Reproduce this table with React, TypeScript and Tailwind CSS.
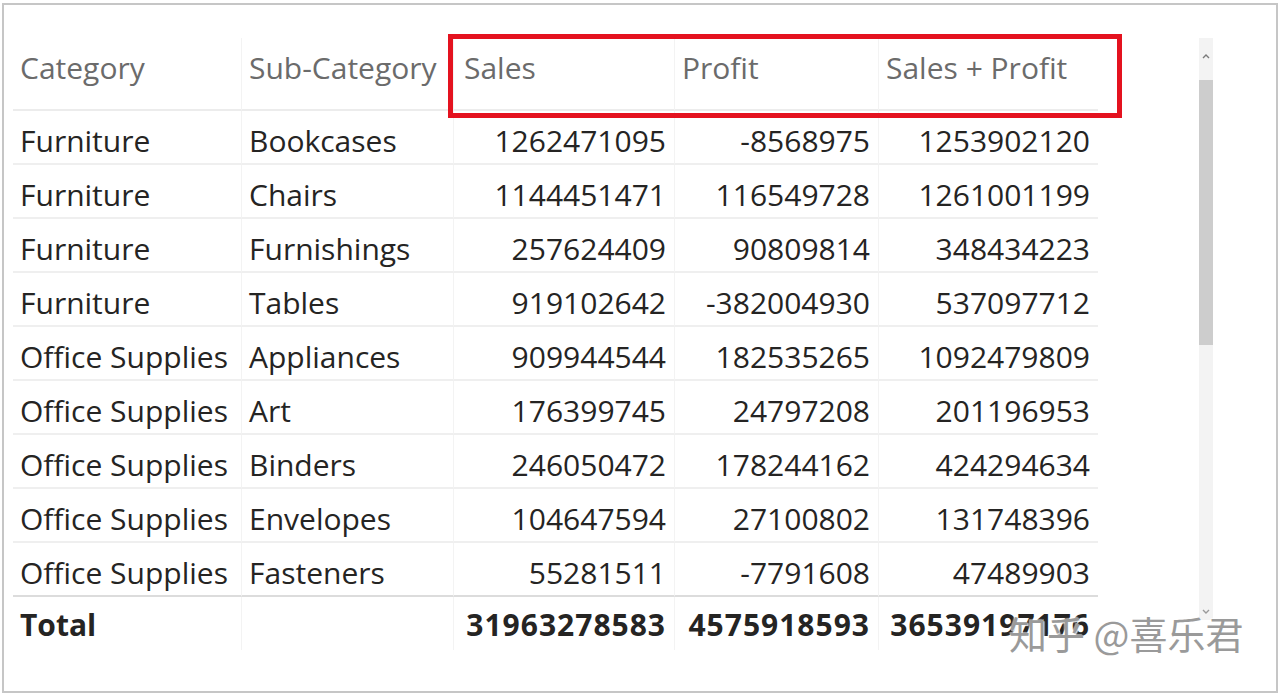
import React from "react";

const rows: [string, string, string, string, string][] = [
  ["Furniture", "Bookcases", "1262471095", "-8568975", "1253902120"],
  ["Furniture", "Chairs", "1144451471", "116549728", "1261001199"],
  ["Furniture", "Furnishings", "257624409", "90809814", "348434223"],
  ["Furniture", "Tables", "919102642", "-382004930", "537097712"],
  ["Office Supplies", "Appliances", "909944544", "182535265", "1092479809"],
  ["Office Supplies", "Art", "176399745", "24797208", "201196953"],
  ["Office Supplies", "Binders", "246050472", "178244162", "424294634"],
  ["Office Supplies", "Envelopes", "104647594", "27100802", "131748396"],
  ["Office Supplies", "Fasteners", "55281511", "-7791608", "47489903"],
];

const font = { fontFamily: '"Open Sans", "Noto Sans", sans-serif' };

export default function App() {
  return (
    <div className="w-[1280px] h-[698px] bg-white overflow-hidden" style={font}>
      <div className="relative mt-[3px] ml-[2px] w-[1276px] h-[690px] border-2 border-[#c6c6c6] bg-white">
        <div className="flex pl-[9px] pt-[33px]">
          <div className="grid grid-cols-[229px_212px_221px_204px_219px] text-[30px] leading-none">
            {/* header */}
            {["Category", "Sub-Category", "Sales", "Profit", "Sales + Profit"].map((h, i) => (
              <div
                key={h}
                className={`h-[73px] flex items-center pl-[7px] text-[#6b6b6b] border-b-2 border-[#ececec] ${i < 4 ? "border-r border-r-[#f3f3f3]" : ""} ${i === 2 ? "pl-[10px]" : ""} whitespace-nowrap`}
              >
                <span className="-mt-[12px]">{h}</span>
              </div>
            ))}
            {rows.map((r, ri) =>
              r.map((c, ci) => (
                <div
                  key={`${ri}-${ci}`}
                  className={`h-[54px] flex items-center whitespace-nowrap text-[#252423] ${
                    ci >= 2 ? "justify-end pr-[8px]" : "pl-[7px]"
                  } ${ci < 4 ? "border-r border-r-[#f3f3f3]" : ""} ${
                    ri === rows.length - 1 ? "border-b-2 border-b-[#dcdcdc]" : "border-b-2 border-b-[#efefef]"
                  }`}
                >
                  <span className="mt-[8px]">{c}</span>
                </div>
              ))
            )}
            {["Total", "", "31963278583", "4575918593", "36539197176"].map((c, ci) => (
              <div
                key={`t-${ci}`}
                className={`h-[53px] flex items-center whitespace-nowrap font-bold text-[#252423] ${
                  ci >= 2 ? "justify-end pr-[8px] tracking-[1px]" : "pl-[7px]"
                } ${ci < 4 ? "border-r border-r-[#f3f3f3]" : ""}`}
              >
                <span className="mt-[2px]">{c}</span>
              </div>
            ))}
          </div>
          {/* scrollbar */}
          <div className="ml-[101px] w-[14px] h-[582px] bg-[#f3f3f3] flex flex-col items-center">
            <svg width="10" height="8" viewBox="0 0 10 8" className="mt-[14px]">
              <path d="M2 6 L5 3 L8 6" fill="none" stroke="#7a7a7a" strokeWidth="1.4" />
            </svg>
            <div className="mt-[20px] w-[14px] h-[265px] bg-[#cdcdcd]" />
            <div className="flex-1" />
            <svg width="10" height="8" viewBox="0 0 10 8" className="mb-[4px]">
              <path d="M2 2 L5 5 L8 2" fill="none" stroke="#9a9a9a" strokeWidth="1.4" />
            </svg>
          </div>
        </div>
        {/* red highlight box */}
        <div className="absolute left-[444px] top-[29px] w-[674px] h-[84px] border-[5px] border-[#e4121f]" />
        {/* watermark */}
        <div
          className="absolute left-[1005px] top-[609px] text-[38px] leading-none text-[#9a9a9a] whitespace-nowrap"
          style={{
            fontFamily: '"Noto Sans CJK SC", "Noto Sans", sans-serif',
            textShadow: "1px 1px 1px rgba(255,255,255,0.9), -1px -1px 1px rgba(255,255,255,0.6)",
          }}
        >
          知乎 @喜乐君
        </div>
      </div>
    </div>
  );
}
